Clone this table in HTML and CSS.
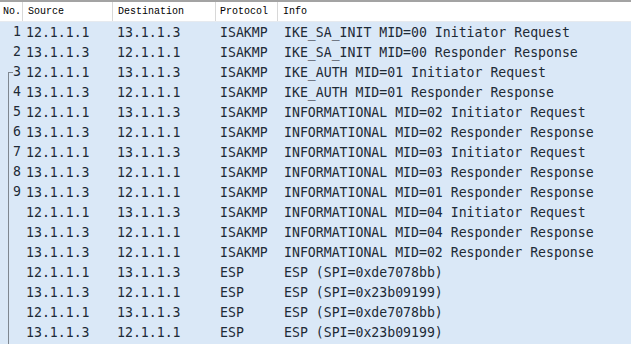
FILE: index.html
```html
<!DOCTYPE html>
<html>
<head>
<meta charset="utf-8">
<link rel="stylesheet" href="styles.css">
</head>
<body>
<div class="list">
  <div class="hdr">
    <div class="hc c-no">No.</div>
    <div class="hc c-src">Source</div>
    <div class="hc c-dst">Destination</div>
    <div class="hc c-pro">Protocol</div>
    <div class="hc c-info">Info</div>
  </div>
  <div class="rows">
    <div class="row"><div class="no">1</div><div class="src">12.1.1.1</div><div class="dst">13.1.1.3</div><div class="pro">ISAKMP</div><div class="info">IKE_SA_INIT MID=00 Initiator Request</div></div>
    <div class="row"><div class="no">2</div><div class="src">13.1.1.3</div><div class="dst">12.1.1.1</div><div class="pro">ISAKMP</div><div class="info">IKE_SA_INIT MID=00 Responder Response</div></div>
    <div class="row"><div class="no rel first">3</div><div class="src">12.1.1.1</div><div class="dst">13.1.1.3</div><div class="pro">ISAKMP</div><div class="info">IKE_AUTH MID=01 Initiator Request</div></div>
    <div class="row"><div class="no rel">4</div><div class="src">13.1.1.3</div><div class="dst">12.1.1.1</div><div class="pro">ISAKMP</div><div class="info">IKE_AUTH MID=01 Responder Response</div></div>
    <div class="row"><div class="no rel">5</div><div class="src">12.1.1.1</div><div class="dst">13.1.1.3</div><div class="pro">ISAKMP</div><div class="info">INFORMATIONAL MID=02 Initiator Request</div></div>
    <div class="row"><div class="no rel">6</div><div class="src">13.1.1.3</div><div class="dst">12.1.1.1</div><div class="pro">ISAKMP</div><div class="info">INFORMATIONAL MID=02 Responder Response</div></div>
    <div class="row"><div class="no rel">7</div><div class="src">12.1.1.1</div><div class="dst">13.1.1.3</div><div class="pro">ISAKMP</div><div class="info">INFORMATIONAL MID=03 Initiator Request</div></div>
    <div class="row"><div class="no rel">8</div><div class="src">13.1.1.3</div><div class="dst">12.1.1.1</div><div class="pro">ISAKMP</div><div class="info">INFORMATIONAL MID=03 Responder Response</div></div>
    <div class="row"><div class="no rel">9</div><div class="src">13.1.1.3</div><div class="dst">12.1.1.1</div><div class="pro">ISAKMP</div><div class="info">INFORMATIONAL MID=01 Responder Response</div></div>
    <div class="row"><div class="no rel"></div><div class="src">12.1.1.1</div><div class="dst">13.1.1.3</div><div class="pro">ISAKMP</div><div class="info">INFORMATIONAL MID=04 Initiator Request</div></div>
    <div class="row"><div class="no rel"></div><div class="src">13.1.1.3</div><div class="dst">12.1.1.1</div><div class="pro">ISAKMP</div><div class="info">INFORMATIONAL MID=04 Responder Response</div></div>
    <div class="row"><div class="no rel"></div><div class="src">13.1.1.3</div><div class="dst">12.1.1.1</div><div class="pro">ISAKMP</div><div class="info">INFORMATIONAL MID=02 Responder Response</div></div>
    <div class="row"><div class="no rel"></div><div class="src">12.1.1.1</div><div class="dst">13.1.1.3</div><div class="pro">ESP</div><div class="info">ESP (SPI=0xde7078bb)</div></div>
    <div class="row"><div class="no rel"></div><div class="src">13.1.1.3</div><div class="dst">12.1.1.1</div><div class="pro">ESP</div><div class="info">ESP (SPI=0x23b09199)</div></div>
    <div class="row"><div class="no rel"></div><div class="src">12.1.1.1</div><div class="dst">13.1.1.3</div><div class="pro">ESP</div><div class="info">ESP (SPI=0xde7078bb)</div></div>
    <div class="row"><div class="no rel"></div><div class="src">13.1.1.3</div><div class="dst">12.1.1.1</div><div class="pro">ESP</div><div class="info">ESP (SPI=0x23b09199)</div></div>
    <div class="row tail"><div class="no rel"></div></div>
  </div>
</div>
</body>
</html>
```
FILE: styles.css
```css
html, body {
  margin: 0;
  padding: 0;
  background: #dae8f7;
}
.list {
  width: 631px;
  height: 344px;
  overflow: hidden;
  border-top: 2px solid #a3a3a3;
  box-sizing: border-box;
  background: #dae8f7;
}
.hdr {
  display: grid;
  grid-template-columns: 22px 90px 103px 62px 1fr;
  height: 19px;
  background: #ffffff;
  border-bottom: 1px solid #e6eaef;
  font-family: "Liberation Mono", monospace;
  font-size: 10px;
  color: #000;
}
.hc {
  display: flex;
  align-items: center;
  border-left: 1px solid #d8d8d8;
  padding-left: 5px;
  white-space: nowrap;
  overflow: hidden;
}
.hc.c-no {
  border-left: none;
  padding-left: 3px;
}
.hc.c-dst { padding-left: 5px; }
.hc.c-pro { padding-left: 4px; }
.hc.c-info { padding-left: 5px; }
.rows {
  font-family: "DejaVu Sans Mono", monospace;
  font-size: 13.2px;
  color: #1d2a36;
}
.row {
  display: grid;
  grid-template-columns: 22px 90px 103px 62px 1fr;
  height: 20px;
  align-items: center;
  white-space: nowrap;
}
.row.tail { height: 4px; }
.no {
  position: relative;
  height: 20px;
  line-height: 20px;
  text-align: right;
  padding-right: 1px;
}
.rel::before {
  content: "";
  position: absolute;
  left: 8px;
  top: 0;
  bottom: 0;
  border-left: 1px solid #7f8790;
}
.rel.first::before {
  top: 10px;
  border-top: 1px solid #7f8790;
  width: 4px;
}
.src { padding-left: 4px; }
.dst { padding-left: 5px; }
.pro { padding-left: 5px; }
.info { padding-left: 7px; }
```
